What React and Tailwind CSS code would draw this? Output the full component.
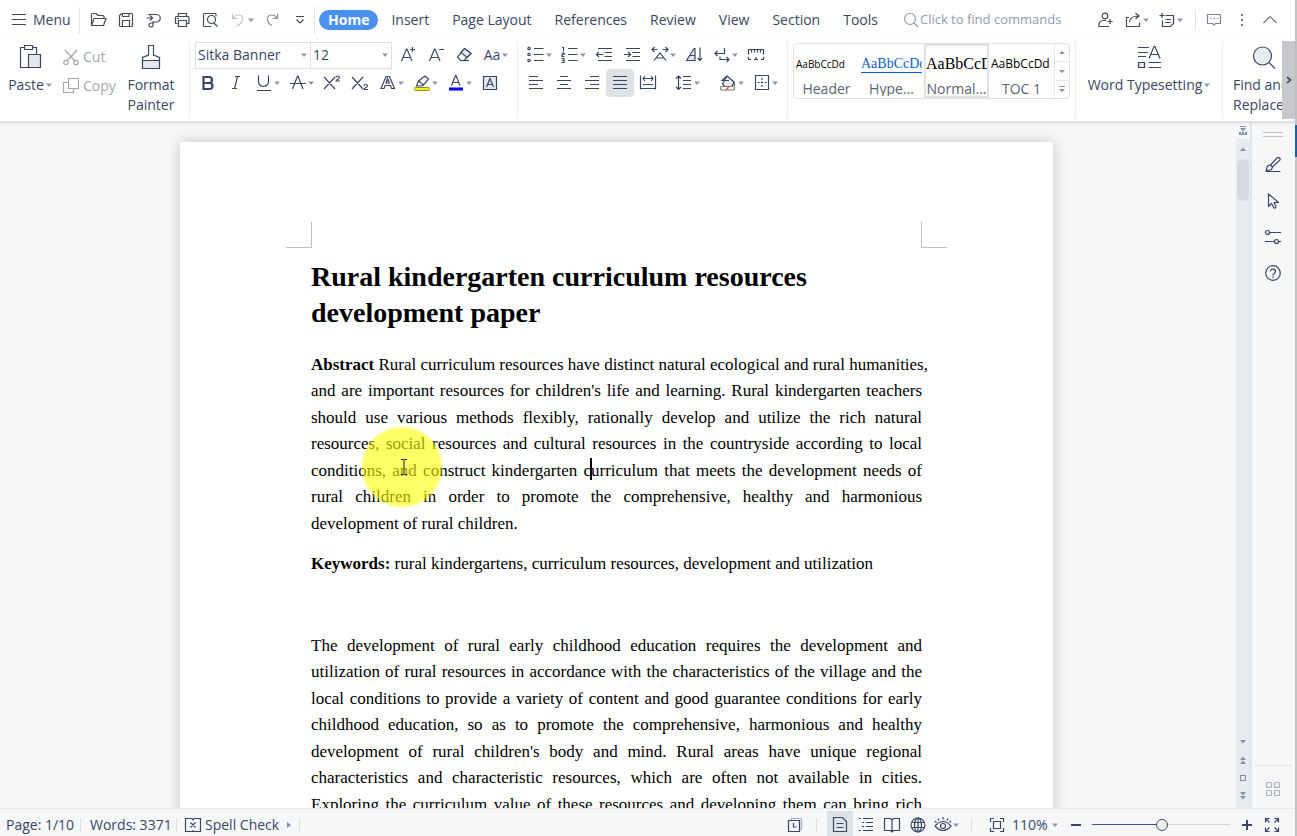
import React from "react";

function Icon({ size = "h-5 w-5", box = "0 0 20 20", children }) {
  return (
    <svg
      className={`${size} shrink-0`}
      viewBox={box}
      fill="none"
      stroke="currentColor"
      strokeWidth="1.2"
      aria-hidden="true"
    >
      {children}
    </svg>
  );
}

function Caret() {
  return (
    <svg className="h-1 w-1.5 shrink-0 text-[#8d98b3]" viewBox="0 0 6 4" aria-hidden="true">
      <path d="M0 0.5h6L3 4z" fill="currentColor" />
    </svg>
  );
}

function Tool({ label, caret, active, tone = "text-[#3a4763]", children }) {
  return (
    <button
      type="button"
      aria-label={label}
      className={`flex h-7 shrink-0 items-center pl-1 ${caret ? "w-[34px]" : "w-7"} ${tone} ${
        active ? "rounded-sm bg-[#dde2e6]" : ""
      }`}
    >
      <Icon>{children}</Icon>
      {caret && <Caret />}
    </button>
  );
}

const Rule = ({ className }) => <div className={`shrink-0 ${className}`} />;

function TopBar() {
  const tabs = ["Insert", "Page Layout", "References", "Review", "View", "Section", "Tools"];
  const dark = "text-[#444b57]";
  return (
    <header className="flex h-10 shrink-0 items-center">
      <button type="button" className="flex w-[79px] shrink-0 items-center gap-1 pl-[9px] text-sm">
        <Icon>
          <path d="M3 4.5h14M3 9.5h14M3 14.5h14" />
        </Icon>
        Menu
      </button>
      <Rule className="mr-1 h-[27px] w-px bg-[#dfe1e4]" />
      <Tool label="Open" tone={dark}>
        <path d="M3.5 15.5v-11q0-1 1-1h3.500l2 2h5q1 0 1 1v2M3.500 15.500l2.500-7h12l-2.500 7z" strokeLinejoin="round" />
      </Tool>
      <Tool label="Save" tone={dark}>
        <path d="M3.500 15.500v-10l2-2h10q1 0 1 1v11q0 1-1 1h-11q-1 0-1-1zM6.500 16v-5.500h7V16M6.500 4v2.500h6.500V4" />
      </Tool>
      <Tool label="Export to PDF" tone={dark}>
        <path d="M4 4.500h8.500a3.500 3.500 0 0 1 0 7.500H9v3a2 2 0 1 1-2-2h3M2.500 8h6M6 5.500L8.500 8 6 10.500" />
      </Tool>
      <Tool label="Print" tone={dark}>
        <path d="M6.500 6.500v-3h8v3M5.500 13.500h-2v-6q0-1 1-1h11.500q1 0 1 1v6h-2M6.500 10.500h8v6h-8zM5 8.500h2" />
      </Tool>
      <Tool label="Print preview" tone={dark}>
        <path d="M11 16.500H4.500q-1 0-1-1v-11q0-1 1-1h10.500q1 0 1 1v2M14 13l3.500 3.500" />
        <circle cx="11.500" cy="9.500" r="4" />
      </Tool>
      <Tool label="Undo" caret tone="text-[#c0c3c9]">
        <path d="M4.500 3.500v5h5M4.500 8.500C8 3.500 14.500 4 14.500 9c0 3-2 5-5.500 7" />
      </Tool>
      <Tool label="Redo" tone="text-[#8791a3]">
        <path d="M15.500 3.500v5h-5M15.500 8.500C12 3.500 5.500 4 5.500 9c0 3 1.500 5 4.500 6.500" />
      </Tool>
      <Tool label="Customize quick access" tone={dark}>
        <path d="M6 6.500h8M6.500 9.500L10 13l3.500-3.500" />
      </Tool>
      <Rule className="mr-1 h-[27px] w-px bg-[#dfe1e4]" />
      <nav className="flex shrink-0 items-center text-sm">
        <a href="#home" className="mr-[13px] h-5 rounded-full bg-[#4a90f0] px-[9px] text-sm font-bold text-white">
          Home
        </a>
        <div className="flex gap-[23px]">
          {tabs.map((t) => (
            <a key={t} href={`#${t.toLowerCase().replace(" ", "-")}`}>
              {t}
            </a>
          ))}
        </div>
      </nav>
      <label className="ml-[23px] flex min-w-0 flex-1 items-center text-[#909cb2]">
        <Icon>
          <circle cx="9" cy="9" r="5.500" />
          <path d="M13 13l4 4" />
        </Icon>
        <input
          aria-label="Find commands"
          placeholder="Click to find commands"
          className="-ml-px w-full min-w-0 text-[13px] outline-none placeholder:text-[#909cb2]"
        />
      </label>
      <div className="flex shrink-0 items-center pr-[11px]">
        <Tool label="Add user" tone={dark}>
          <circle cx="10" cy="6" r="2.800" />
          <path d="M14 16.500H4c-1-3.500 1.500-6 5-6h2M12.500 11.500h5M15 9v5" />
        </Tool>
        <Tool label="Share" caret tone={dark}>
          <path d="M6 7.500H3.500v9h13v-4M6.500 12c.5-4.500 4-6 9-6M12.500 3l3.500 3-3.500 3" />
        </Tool>
        <Tool label="Notes" caret>
          <path d="M8.500 5.500h8v8l-3 3H5.500v-6M5 3v5M2.500 5.500h5M8.500 9.500h5.500M8 12.500h5.500" />
        </Tool>
        <Rule className="mr-1 ml-2 h-5 w-px bg-[#dfe1e4]" />
        <Tool label="Comments" tone="text-[#7f8798]">
          <path d="M3.500 4.500h13v9h-5L10 15l-1.500-1.500h-5zM6 8.500h1.500M9.500 8.500H11M13 8.500h1.500" />
        </Tool>
        <Tool label="More options" tone="text-[#6d7587]">
          <path d="M10 4v2M10 9v2M10 14v2" strokeWidth="2" />
        </Tool>
        <Tool label="Collapse ribbon" tone="text-[#6d7587]">
          <path d="M3.500 13L10 6.500l6.500 6.500" />
        </Tool>
      </div>
    </header>
  );
}

function Combo({ label, value, className }) {
  return (
    <div className={`relative flex h-[27px] items-center border border-[#dcdfe3] ${className}`}>
      <select aria-label={label} className="w-full appearance-none bg-transparent pl-0.5 text-sm outline-none">
        <option>{value}</option>
      </select>
      <span className="pointer-events-none absolute right-[3px] flex">
        <Caret />
      </span>
    </div>
  );
}

function FontGroup() {
  return (
    <section className="flex w-[328px] shrink-0 flex-col border-r border-[#eceef0] pl-1">
      <div className="flex h-7 items-center">
        <Combo label="Font" value="Sitka Banner" className="ml-px w-[116px]" />
        <Combo label="Font size" value="12" className="mr-0.5 w-[81px] border-l-0" />
        <Tool label="Increase font size">
          <path d="M3.500 16L8.500 4h.500l5 12M5 12.500h7.500M12 4.500h5M14.500 2v5" />
        </Tool>
        <Tool label="Decrease font size">
          <path d="M3.500 16L8.500 4h.500l5 12M5 12.500h7.500M13 4.500h5" />
        </Tool>
        <Tool label="Clear formatting">
          <path d="M10.500 3.500l6.500 5-7 7H6.500L3.500 12z" />
          <path d="M10.500 3.500l6.500 5-4 4-6-5z" fill="#e4e7ec" />
          <path d="M8 15.500h7" />
        </Tool>
        <button type="button" aria-label="Change case" className="flex h-7 w-[34px] items-center pl-1 text-[#3a4763]">
          <span className="w-5 text-sm">Aa</span>
          <Caret />
        </button>
      </div>
      <div className="flex h-7 items-center">
        <Tool label="Bold">
          <path d="M5.500 4h5.500a3 3 0 0 1 0 6H5.500zM5.500 10h6a3 3 0 0 1 0 6h-6z" strokeWidth="2.200" />
        </Tool>
        <Tool label="Italic">
          <path d="M9 3.500h5M6 15.500h5M11.500 3.500l-3 12" />
        </Tool>
        <Tool label="Underline" caret>
          <path d="M4.500 2.500v6a5 5 0 0 0 10 0v-6M3 17.500h14" />
        </Tool>
        <Tool label="Strikethrough" caret>
          <path d="M4.500 16L9.500 3h.500l5 13M2 10.500h16" />
        </Tool>
        <Tool label="Superscript">
          <path d="M2 4l11 12M13 4L2 16M14 4.500c0-2 3.500-2 3.500 0 0 1.500-3.500 2-3.500 3.500h4" />
        </Tool>
        <Tool label="Subscript">
          <path d="M2 4l11 12M13 4L2 16M14 13c0-2 3.500-2 3.500 0 0 1.500-3.500 2-3.500 3.500h4" />
        </Tool>
        <Tool label="Text effects" caret>
          <path d="M3 15.500L8 3.500h3.500l5 12h-3l-1-3H7l-1 3zM8 10h3.500L9.500 5.500z" />
        </Tool>
        <Tool label="Highlight" caret>
          <path d="M4.500 13l2-5 6.500-5 3.500 3-5.500 6.500-2 .5zM7 8l4 4" />
          <rect x="2.500" y="14.500" width="15" height="3" rx="1" fill="#f6f600" stroke="#8c8c3a" strokeWidth="1" />
        </Tool>
        <Tool label="Font color" caret>
          <path d="M5.500 12.500L9.500 2.500h.500l4 10M7 9.500h6" />
          <path d="M3 16h14" stroke="#0000f5" strokeWidth="3" />
        </Tool>
        <Tool label="Character shading">
          <path d="M3.500 3.500h13v13h-13z" fill="#e4e7ec" />
          <path d="M6.500 14l3.500-8.500 3.500 8.500M7.500 11.500h5" />
        </Tool>
      </div>
    </section>
  );
}

function ParagraphGroup() {
  return (
    <section className="flex w-[270px] shrink-0 flex-col border-r border-[#eceef0] pl-1">
      <div className="flex h-7 items-center">
        <Tool label="Bullets" caret>
          <path d="M8 3.500h9.500M8 9.500h9.500M8 15.500h9.500" />
          <circle cx="3" cy="3.500" r="1.200" />
          <circle cx="3" cy="9.500" r="1.200" />
          <circle cx="3" cy="15.500" r="1.200" />
        </Tool>
        <Tool label="Numbering" caret>
          <path d="M8 3.500h9.500M8 9.500h9.500M8 15.500h9.500M2 2.500h1.500v4M1.500 8h2.500v1.500H2v2h2.500M1.500 13.500H4v4H1.500M2 15.500h2" />
        </Tool>
        <Tool label="Decrease indent">
          <path d="M4 3.500h14M10.500 7.500H18M10.500 11.500H18M4 15.500h14M2.500 9.500H9M5 7L2.500 9.500 5 12" />
        </Tool>
        <Tool label="Increase indent">
          <path d="M4 3.500h14M10.500 7.500H18M10.500 11.500H18M4 15.500h14M2 9.500h6.500M6 7l2.500 2.500L6 12" />
        </Tool>
        <Tool label="Text direction" caret>
          <path d="M4 15.500l6-7.500 6 7.500M6 13h8M2 4.500h5.500M4.500 2L2 4.500 4.500 7M18 4.500h-5.500M15.500 2L18 4.500 15.500 7" />
        </Tool>
        <Tool label="Sort">
          <path d="M2.500 15.500L10 3.500h1v12z" fill="#e4e7ec" />
          <path d="M6 10.500h5M16 2.500v13M13.500 13l2.500 2.500 2-2.500" />
        </Tool>
        <Tool label="Paragraph marks" caret>
          <path d="M12.500 3v5.500H3M5.500 6L3 8.500 5.500 11M8 11.500v3h9M14.500 12l2.500 2.500-2.500 2.500" />
        </Tool>
        <Tool label="Ruler">
          <path d="M2.500 9.500v-5h15v5M5.500 4.500v3M8.500 4.500v3M11.500 4.500v3M14.500 4.500v3M2.500 12v2.500H5M8 14.500h4M10 12v2.500M15 14.500h2.500V12" />
        </Tool>
      </div>
      <div className="flex h-7 items-center">
        <Tool label="Align left">
          <path d="M3 3.500h9M3 7.500h14M3 11.500h9M3 15.500h14" />
        </Tool>
        <Tool label="Align center">
          <path d="M6 3.500h8M3 7.500h14M6 11.500h8M3 15.500h14" />
        </Tool>
        <Tool label="Align right">
          <path d="M8 3.500h9M3 7.500h14M8 11.500h9M3 15.500h14" />
        </Tool>
        <Tool label="Justify" active>
          <path d="M3 3.500h14M3 7.500h14M3 11.500h14M3 15.500h14" />
        </Tool>
        <Tool label="Distribute">
          <path d="M2.500 2.500v14M17.500 2.500v14M5 5.500h10M7 3L5 5.500 7 8M13 3l2 2.500L13 8M5 11.500h10M3 15.500h14" />
        </Tool>
        <div className="w-2" />
        <Tool label="Line spacing" caret>
          <path d="M4.500 3v14M2 5.500L4.500 3 7 5.500M2 14l2.500 2.500L7 14M9 3.500h8M9 7.500h8M9 11.500h8M9 15.500h8" />
        </Tool>
        <div className="w-2.5" />
        <Tool label="Shading" caret>
          <path d="M9 3l7 6-2.500 5.500h-6L4.500 11z" fill="#eceff2" />
          <path d="M9 3L4 7.500h7M16 9l.5 4" />
          <rect x="2.500" y="13.500" width="14" height="3.500" rx="1.500" fill="#fff" stroke="#777" />
          <path d="M8 17l3-3.500" stroke="#e0563b" />
        </Tool>
        <Tool label="Borders" caret>
          <path d="M3.500 2.500h13v14h-13z" />
          <path d="M10 5v9.500M5.500 9.500h9.500" strokeDasharray="2 1.500" />
        </Tool>
      </div>
    </section>
  );
}

const galleryStyles = [
  { name: "Header", cls: "text-[10px] text-black" },
  { name: "Hype...", cls: "font-['Liberation_Serif',serif] text-sm text-[#0b63c4] underline underline-offset-4" },
  { name: "Normal...", cls: "font-['Liberation_Serif',serif] text-base text-black", active: true },
  { name: "TOC 1", cls: "text-xs text-black" },
];

function StyleGallery() {
  return (
    <section className="w-72 shrink-0 border-r border-[#eceef0] pt-0.5 pl-[5px]">
      <div className="flex h-14 w-[277px] rounded-sm border border-[#dfe1e4]">
        {galleryStyles.map((s) => (
          <button
            key={s.name}
            type="button"
            className={`flex w-[65px] flex-col overflow-hidden border-2 ${
              s.active ? "border-[#dfe1e4]" : "border-transparent"
            }`}
          >
            <span className={`flex h-[33px] w-full shrink-0 items-center pt-0.5 whitespace-nowrap ${s.cls}`}>
              AaBbCcDd
            </span>
            <span className="w-full text-center text-sm leading-5 whitespace-nowrap text-[#5b6373]">{s.name}</span>
          </button>
        ))}
        <div className="flex flex-1 flex-col divide-y divide-[#e6e8ea] border-l border-[#e6e8ea] text-[#8690a6]">
          {[
            ["Previous styles", "M2 6h6L5 3z"],
            ["Next styles", "M2 4h6L5 7z"],
            ["All styles", "M2 2h6v1H2zM2 5h6L5 8z"],
          ].map(([label, d]) => (
            <button key={label} type="button" aria-label={label} className="flex flex-1 items-center justify-center">
              <svg className="h-2.5 w-2.5" viewBox="0 0 10 10" fill="currentColor" aria-hidden="true">
                <path d={d} />
              </svg>
            </button>
          ))}
        </div>
      </div>
    </section>
  );
}

function Ribbon() {
  return (
    <div className="z-10 flex h-[82px] shrink-0 border-b border-[#e2e4e6] pt-px pb-0.5 text-sm leading-5 shadow-sm">
      <section className="flex w-[190px] shrink-0 border-r border-[#eceef0] pt-1 pl-2">
        <button type="button" className="flex w-11 flex-col items-center">
          <Icon size="h-[30px] w-[26px]" box="0 0 26 30">
            <path d="M7.500 2.500h-4v20h8M15.500 2.500h4v7M7.500.500h8v4h-8z" />
            <path d="M11.500 9.500h12v13h-12z" fill="#e4e7ec" />
          </Icon>
          <span className="flex items-center gap-0.5">
            Paste <Caret />
          </span>
        </button>
        <div className="ml-[11px] flex w-14 flex-col gap-[9px] pt-0.5 text-[#a4a7ad]">
          <button type="button" className="flex items-center gap-1">
            <Icon size="h-5 w-4" box="0 0 16 20">
              <path d="M2 3l10 11M14 3L4 14" />
              <circle cx="3" cy="15.500" r="2.200" />
              <circle cx="13" cy="15.500" r="2.200" />
            </Icon>
            Cut
          </button>
          <button type="button" className="flex items-center gap-1">
            <Icon size="h-5 w-4" box="0 0 16 20">
              <path d="M5.500 2.500h10v10h-10zM5.500 6.500h-5v10h10v-4" />
            </Icon>
            Copy
          </button>
        </div>
        <button type="button" className="ml-0.5 flex w-[60px] flex-col items-center">
          <Icon size="h-[30px] w-[26px]" box="0 0 26 30">
            <path d="M4.500 15.500h17v8h-17z" fill="#e4e7ec" />
            <path d="M4.500 15.500v-3l6-2.500V.500h5V10l6 2.500v3" />
          </Icon>
          <span>Format</span>
          <span>Painter</span>
        </button>
      </section>
      <FontGroup />
      <ParagraphGroup />
      <StyleGallery />
      <section className="w-[147px] shrink-0 border-r border-[#eceef0] pt-1">
        <button type="button" className="flex w-full flex-col items-center">
          <Icon size="h-[30px] w-[26px]" box="0 0 26 30">
            <path d="M2 2.500h11M2 7.500h10M2 11.500h8M12.500 22.500H25M12.500 17.500H25M13 13.500l5-12h1l5 12M15 9.500h7" />
            <path d="M2.500 17.500h6v5h-6z" fill="#e4e7ec" />
          </Icon>
          <span className="flex items-center gap-0.5">
            Word Typesetting <Caret />
          </span>
        </button>
      </section>
      <section className="min-w-0 flex-1 overflow-hidden pt-1 pl-2.5">
        <button type="button" className="flex w-[62px] flex-col items-start whitespace-nowrap">
          <span className="pl-[18px]">
            <Icon size="h-[30px] w-[26px]" box="0 0 26 30">
              <circle cx="11.500" cy="11" r="9" fill="#e9ecef" />
              <path d="M18 17.500l6 6" />
            </Icon>
          </span>
          <span>Find and</span>
          <span>Replace</span>
        </button>
      </section>
      <button type="button" aria-label="Scroll ribbon" className="flex w-[13px] shrink-0 items-center justify-center bg-[#c6c8cd]">
        <svg className="h-2 w-1.5" viewBox="0 0 6 8" fill="none" stroke="#2f3a52" strokeWidth="1.5" aria-hidden="true">
          <path d="M1 1l3.500 3L1 7" />
        </svg>
      </button>
    </div>
  );
}

const abstractLines = [
  "and are important resources for children's life and learning. Rural kindergarten teachers",
  "should use various methods flexibly, rationally develop and utilize the rich natural",
  "resources, social resources and cultural resources in the countryside according to local",
  "conditions, and construct kindergarten curriculum that meets the development needs of",
  "rural children in order to promote the comprehensive, healthy and harmonious",
];

const bodyLines = [
  "The development of rural early childhood education requires the development and",
  "utilization of rural resources in accordance with the characteristics of the village and the",
  "local conditions to provide a variety of content and good guarantee conditions for early",
  "childhood education, so as to promote the comprehensive, harmonious and healthy",
  "development of rural children's body and mind. Rural areas have unique regional",
  "characteristics and characteristic resources, which are often not available in cities.",
  "Exploring the curriculum value of these resources and developing them can bring rich",
];

const Line = ({ children }) => <span className="block [text-align-last:justify]">{children}</span>;

function Page() {
  return (
    <article className="relative mx-auto mt-5 w-[873px] bg-white px-[106px] pt-20 text-[17px] leading-[26px] whitespace-nowrap text-black shadow-[0_0_14px_rgba(0,0,0,0.2)] font-['Liberation_Serif',serif]">
      <div className="flex justify-between">
        <div className="h-[26px] w-[26px] border-r border-b border-[#bfbfbf]" />
        <div className="h-[26px] w-[26px] border-b border-l border-[#bfbfbf]" />
      </div>
      <div className="px-[25px]">
        <h1 className="mt-[11px] text-[28px] leading-9 font-bold">
          Rural kindergarten curriculum resources
          <br />
          development paper
        </h1>
        <p className="mt-[21px] grid h-[185px] auto-rows-fr grid-cols-1">
          <Line>
            <b>Abstract</b> Rural curriculum resources have distinct natural ecological and rural humanities,
          </Line>
          {abstractLines.map((l) => (
            <Line key={l}>{l}</Line>
          ))}
          <span className="block">development of rural children.</span>
        </p>
        <p className="mt-3.5">
          <b>Keywords:</b> rural kindergartens, curriculum resources, development and utilization
        </p>
        <p className="mt-14 grid h-[185px] auto-rows-fr grid-cols-1">
          {bodyLines.map((l) => (
            <Line key={l}>{l}</Line>
          ))}
        </p>
      </div>
      <div className="absolute top-[283px] left-[180px] flex h-[84px] w-[84px] items-center justify-center rounded-full bg-[radial-gradient(closest-side,rgba(255,255,0,0.6)_90%,rgba(255,255,0,0)_100%)] pl-1">
        <svg className="h-4 w-2" viewBox="0 0 8 16" fill="none" stroke="#16213f" aria-hidden="true">
          <path d="M1 .5h2.500L4 1l.5-.5H7M4 1v14M1 15.500h2.500L4 15l.5.5H7" />
        </svg>
      </div>
      <div className="absolute top-[316px] left-[410px] h-[22px] w-0.5 bg-black" />
    </article>
  );
}

function ScrollMark({ d }) {
  return (
    <svg className="h-3 w-3 text-[#8590ab]" viewBox="0 0 12 12" fill="currentColor" aria-hidden="true">
      <path d={d} />
    </svg>
  );
}

function Workspace() {
  return (
    <div className="flex min-h-0 flex-1 bg-[#f5f7f9]">
      <main className="min-w-0 flex-1 overflow-hidden pr-[3px]">
        <Page />
      </main>
      <div className="flex w-3.5 shrink-0 flex-col items-center bg-[#e7ebf0]">
        <div className="flex h-[17px] w-full items-center justify-center bg-[#f5f7f9]">
          <ScrollMark d="M3 1h6v1H3zM3 3h6L6 6.500zM2 7h2v3H2zM5 7h2v3H5zM8 7h2v3H8zM2 9h8v1H2z" />
        </div>
        <div className="flex h-5 items-center">
          <ScrollMark d="M3 8h6L6 4.500z" />
        </div>
        <div className="h-[42px] w-3 rounded-full bg-[#d6d9e0]" />
        <div className="mt-auto flex flex-col items-center gap-1.5 pb-1.5">
          <ScrollMark d="M3 4h6L6 7.500z" />
          <ScrollMark d="M3 6h6L6 2.500zM3 10h6L6 6.500z" />
          <ScrollMark d="M3 3h6v6H3zM4 4v4h4V4z" />
          <ScrollMark d="M3 2h6L6 5.500zM3 6h6L6 9.500z" />
        </div>
      </div>
      <aside className="flex w-[45px] shrink-0 flex-col items-center border-l-2 border-[#e3e6e9] pr-0.5 text-[#3a4763]">
        <div className="mt-2.5 h-[5px] w-5 border-y border-[#c0c4c9]" />
        <div className="mt-[18px] flex flex-col gap-4">
          <button type="button" aria-label="Edit">
            <Icon>
              <path d="M2.500 16.500h15M3 16l1.500-5 3-1 2 2-1 2.500L3 16M7.500 10l7-7.500q1-.500 2 .500t.500 2l-7.500 7" />
            </Icon>
          </button>
          <button type="button" aria-label="Select">
            <Icon>
              <path d="M5.500 3v12.500l3-3 2.500 4.500q2 .500 2-1.500l-2-4h4.500z" strokeLinejoin="round" />
            </Icon>
          </button>
          <button type="button" aria-label="Properties">
            <Icon>
              <circle cx="4.500" cy="5.500" r="2" />
              <circle cx="13.500" cy="14.500" r="2" />
              <path d="M6.500 5.500H18M2 14.500h9.500M15.500 14.500H18" />
            </Icon>
          </button>
          <button type="button" aria-label="Help">
            <Icon>
              <circle cx="10" cy="10" r="7.300" />
              <path d="M7.500 8.500c0-3.500 5-3 5 0 0 1.500-2.500 2-2.500 4M10 13.500v1.500" />
            </Icon>
          </button>
        </div>
        <div className="mt-auto flex h-[43px] w-[38px] items-center justify-center border-t border-[#dfe2e5] pt-1 text-[#a9adb4]">
          <button type="button" aria-label="All panes">
            <Icon>
              <rect x="3.500" y="3.500" width="5" height="5" rx="1" />
              <rect x="11.500" y="3.500" width="5" height="5" rx="1" />
              <rect x="3.500" y="11.500" width="5" height="5" rx="1" />
              <rect x="11.500" y="11.500" width="5" height="5" rx="1" />
            </Icon>
          </button>
        </div>
      </aside>
    </div>
  );
}

function StatusButton({ label, active, children }) {
  return (
    <button
      type="button"
      aria-label={label}
      className={`flex h-[27px] w-[26px] items-center justify-center ${active ? "bg-[#dce2e5]" : ""}`}
    >
      <Icon>{children}</Icon>
    </button>
  );
}

function StatusBar() {
  return (
    <footer className="flex h-7 shrink-0 items-center border-t border-[#e3e5e8] bg-[#f5f7f9] pt-1 pl-1.5 text-sm whitespace-nowrap text-[#3a4763]">
      <span className="w-[74px]">Page: 1/10</span>
      <Rule className="h-3.5 w-px bg-[#dddfe2]" />
      <span className="w-[95px] pl-[9px]">Words: 3371</span>
      <Rule className="h-3.5 w-px bg-[#dddfe2]" />
      <button type="button" className="flex items-center gap-0.5 pl-1.5">
        <Icon>
          <path d="M9 3.500H2.500v13h15v-13H11L10 5zM10 16.500V15M7.500 7.500l5 5M12.500 7.500l-5 5" />
        </Icon>
        Spell Check
        <svg className="ml-1.5 h-1.5 w-1 text-[#8590ab]" viewBox="0 0 4 6" aria-hidden="true">
          <path d="M0 0v6l4-3z" fill="currentColor" />
        </svg>
      </button>
      <Rule className="ml-2 h-3.5 w-px bg-[#dddfe2]" />
      <div className="ml-auto flex items-center pr-2.5">
        <StatusButton label="History">
          <path d="M6.500 5.500v-2h10v11h-2" stroke="#a9adb4" />
          <path d="M3.500 5.500h11v11h-11zM8.500 8v4h3" />
        </StatusButton>
        <Rule className="mr-2.5 ml-2 h-3.5 w-px bg-[#dddfe2]" />
        <StatusButton label="Page view" active>
          <path d="M3.500 2.500h9l4 4v10h-13zM6.500 8.500h7M6.500 12.500h7" />
        </StatusButton>
        <StatusButton label="Outline view">
          <path d="M3 3.500h2M7 3.500h10M6 7.500h2M10 7.500h7M6 11.500h2M10 11.500h7M3 15.500h2M7 15.500h10" />
        </StatusButton>
        <StatusButton label="Reading view">
          <path d="M10 5L8.500 3.500h-6v12h6L10 17l1.500-1.500h6v-12h-6zv12" />
        </StatusButton>
        <StatusButton label="Web view">
          <circle cx="10" cy="10" r="7" />
          <ellipse cx="10" cy="10" rx="3.500" ry="7" />
          <path d="M3 7.500h14M3 12.500h14M10 3v14" />
        </StatusButton>
        <button type="button" aria-label="Eye protection" className="flex w-10 items-center pl-0.5">
          <Icon>
            <path d="M2 11q8-9 16 0-8 9-16 0M5 3.500l1 2M10 2v2.500M15 3.500l-1 2M2 6l1.500 1.500M18 6l-1.500 1.500" />
            <circle cx="10" cy="11" r="2.500" />
          </Icon>
          <Caret />
        </button>
        <Rule className="mr-3 h-3.5 w-px bg-[#dddfe2]" />
        <StatusButton label="Fit page">
          <path d="M3.500 7V3.500H7M13 3.500h3.500V7M16.500 13v3.500H13M7 16.500H3.500V13M6.500 6.500h7v7h-7z" />
        </StatusButton>
        <button type="button" className="flex w-[54px] items-center gap-1 pl-0.5">
          110% <Caret />
        </button>
        <button type="button" aria-label="Zoom out" className="flex w-6 justify-center">
          <Icon>
            <path d="M5 10h10" strokeWidth="2" />
          </Icon>
        </button>
        <input
          type="range"
          aria-label="Zoom"
          min="0"
          max="100"
          defaultValue="51"
          className="mr-[5px] ml-1 h-4 w-[138px] appearance-none bg-[linear-gradient(to_right,#3f5684_50%,#d3d6da_50%)] bg-[length:100%_1px] bg-center bg-no-repeat [&::-webkit-slider-thumb]:h-3 [&::-webkit-slider-thumb]:w-3 [&::-webkit-slider-thumb]:appearance-none [&::-webkit-slider-thumb]:rounded-full [&::-webkit-slider-thumb]:border [&::-webkit-slider-thumb]:border-[#4a4f58] [&::-webkit-slider-thumb]:bg-[#eceef0]"
        />
        <button type="button" aria-label="Zoom in" className="flex w-6 justify-center">
          <Icon>
            <path d="M5 10h10M10 5v10" strokeWidth="2" />
          </Icon>
        </button>
        <StatusButton label="Full screen">
          <path d="M3.500 7.500v-4h4M3.500 3.500l4 4M12.500 3.500h4v4M16.500 3.500l-4 4M16.500 12.500v4h-4M16.500 16.500l-4-4M7.500 16.500h-4v-4M3.500 16.500l4-4" />
        </StatusButton>
      </div>
    </footer>
  );
}

export default function App() {
  return (
    <div className="flex h-screen overflow-hidden bg-white text-[#3a4763] font-['Open_Sans','Noto_Sans',sans-serif]">
      <div className="flex min-w-0 flex-1 flex-col">
        <TopBar />
        <Ribbon />
        <Workspace />
        <StatusBar />
      </div>
      <div className="w-0.5 shrink-0 bg-[#c4c4c4] pt-[125px]">
        <div className="h-8 bg-[#1f5aa8]" />
      </div>
    </div>
  );
}
